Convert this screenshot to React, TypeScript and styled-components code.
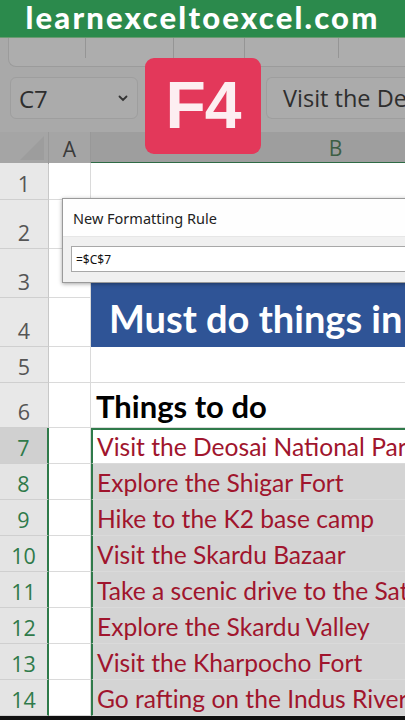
import React from "react";
import styled, { createGlobalStyle } from "styled-components";

const GlobalStyle = createGlobalStyle`
  html, body { margin: 0; padding: 0; background: #ffffff; }
  body { width: 405px; height: 720px; overflow: hidden; }
  * { box-sizing: border-box; }
`;

const Page = styled.div`
  position: relative;
  width: 405px;
  height: 720px;
  display: flex;
  flex-direction: column;
  overflow: hidden;
  background: #fff;
`;

const TopBar = styled.div`
  height: 38px;
  background: #2b8a4c;
  display: flex;
  align-items: center;
  justify-content: center;
  color: #fff;
  font-family: Lato, "Open Sans", sans-serif;
  font-weight: 900;
  font-size: 31px;
  line-height: 1;
  letter-spacing: 2.2px;
  padding-bottom: 3px;
  white-space: nowrap;
  border-bottom: 1px solid #6a9a70;
`;

const Ribbon = styled.div`
  background: #a9a9a9;
  display: flex;
  flex-direction: column;
`;

const TabStrip = styled.div`
  margin: 0 0 0 8px;
  height: 29px;
  display: grid;
  grid-template-columns: 77px 88px 71px 94px 1fr;
  background: #adadad;
  border: 1px solid #9b9b9b;
  border-top: none;
  border-right: none;
  border-radius: 0 0 0 8px;
`;

const TabCell = styled.div<{ $last?: boolean }>`
  border-right: ${(p) => (p.$last ? "none" : "1px solid #959595")};
  margin: 0 0 8px;
`;

const ToolRow = styled.div`
  height: 65px;
  display: flex;
  align-items: flex-start;
  padding: 10px 0 0 10px;
`;

const NameBox = styled.div`
  width: 128px;
  height: 42px;
  border-radius: 6px;
  background: #ababab;
  border: 1px solid #9e9e9e;
  display: flex;
  align-items: center;
  justify-content: space-between;
  padding: 0 8px 0 8px;
  font-family: "Open Sans", "Noto Sans", sans-serif;
  font-size: 24px;
  color: #2e2e2e;
`;

const Chevron = styled.svg`
  width: 12px;
  height: 12px;
`;

const FormulaBox = styled.div`
  margin-left: 128px;
  flex: 1;
  height: 42px;
  border-radius: 6px 0 0 6px;
  background: #ababab;
  border: 1px solid #9e9e9e;
  border-right: none;
  display: flex;
  align-items: center;
  padding-left: 16px;
  white-space: nowrap;
  overflow: hidden;
  font-family: "Open Sans", "Noto Sans", sans-serif;
  font-size: 23.5px;
  color: #2e2e2e;
`;

const ColHeaders = styled.div`
  height: 31px;
  display: grid;
  grid-template-columns: 49px 42px 490px;
  background: #a5a5a5;
  font-family: "Open Sans", "Noto Sans", sans-serif;
  font-size: 21px;
  color: #3a3a3a;
`;

const Corner = styled.div`
  position: relative;
  border-right: 1px solid #999;
  svg { position: absolute; right: 4px; bottom: 4px; }
`;

const ColHead = styled.div<{ $selected?: boolean }>`
  display: flex;
  align-items: center;
  justify-content: center;
  padding-top: 2px;
  background: ${(p) => (p.$selected ? "#9e9e9e" : "#a5a5a5")};
  border-right: 1px solid #989898;
  border-bottom: ${(p) => (p.$selected ? "2px solid #2e6b45" : "1px solid #989898")};
  color: ${(p) => (p.$selected ? "#3d5e45" : "#3a3a3a")};
`;

const Sheet = styled.div`
  display: grid;
  grid-template-columns: 49px 42px 490px;
  grid-template-rows: 37px 49px 49px 49px 36px 45px repeat(8, 36px);
  font-family: "Open Sans", "Noto Sans", sans-serif;
`;

const RowHead = styled.div<{ $state?: "normal" | "active" | "sel" }>`
  display: flex;
  align-items: flex-end;
  justify-content: center;
  padding-bottom: 1px;
  font-size: 21.5px;
  background: ${(p) =>
    p.$state === "active" ? "#d0d0d0" : p.$state === "sel" ? "#e4e4e4" : "#e8e8e8"};
  color: ${(p) => (p.$state && p.$state !== "normal" ? "#2f7a4a" : "#555")};
  border-bottom: 1px solid #cfcfcf;
  border-right: ${(p) => (p.$state && p.$state !== "normal" ? "2px solid #2f7a4a" : "1px solid #c8c8c8")};
`;

const Cell = styled.div<{ $bg?: string; $topSel?: boolean; $leftSel?: boolean }>`
  background: ${(p) => p.$bg || "#fff"};
  border-bottom: 1px solid #dadada;
  border-right: 1px solid #dadada;
  border-left: ${(p) => (p.$leftSel ? "2px solid #2f7a4a" : "none")};
  border-top: ${(p) => (p.$topSel ? "2px solid #2f7a4a" : "none")};
  display: flex;
  align-items: flex-end;
  white-space: nowrap;
  overflow: hidden;
`;

const Banner = styled.div`
  grid-row: span 2;
  background: #2f5496;
  color: #fff;
  font-family: Lato, "Open Sans", sans-serif;
  font-weight: 700;
  font-size: 38px;
  display: flex;
  align-items: flex-end;
  padding: 0 0 6px 18px;
  white-space: nowrap;
  overflow: hidden;
`;

const HeadingText = styled.span`
  font-family: Lato, "Open Sans", sans-serif;
  font-weight: 700;
  font-size: 31px;
  color: #000;
  padding: 0 0 2px 5px;
`;

const ItemText = styled.span`
  font-family: Lato, "Open Sans", sans-serif;
  font-size: 24.6px;
  color: #a0152d;
  padding: 0 0 2px 4px;
`;

const BottomEdge = styled.div`
  flex: 1;
  background: #111;
`;

const Badge = styled.div`
  position: absolute;
  left: 145px;
  top: 58px;
  width: 116px;
  height: 96px;
  border-radius: 9px;
  background: #e3385a;
  color: #fdeef1;
  display: flex;
  align-items: center;
  justify-content: center;
  font-family: "Liberation Sans", Arial, sans-serif;
  font-weight: 700;
  font-size: 66px;
  letter-spacing: -1px;
  padding-bottom: 2px;
`;

const Dialog = styled.div`
  position: absolute;
  left: 62px;
  top: 198px;
  width: 360px;
  height: 85px;
  background: #f0f0f0;
  border: 1px solid #9a9a9a;
  box-shadow: 0 1px 4px rgba(0, 0, 0, 0.35);
  display: flex;
  flex-direction: column;
  font-family: "Noto Sans", "Open Sans", sans-serif;
`;

const DialogTitle = styled.div`
  height: 38px;
  background: #fefefe;
  display: flex;
  align-items: center;
  padding-left: 10px;
  font-size: 14.5px;
  color: #222;
  border-bottom: 1px solid #e6e6e6;
`;

const DialogBody = styled.div`
  padding: 9px 0 0 8px;
`;

const RuleInput = styled.div`
  height: 26px;
  background: #fff;
  border: 1px solid #a8a8a8;
  border-right: none;
  display: flex;
  align-items: center;
  padding-left: 4px;
  font-size: 12px;
  color: #111;
`;

type RowState = "normal" | "active" | "sel";

const items = [
  "Visit the Deosai National Park",
  "Explore the Shigar Fort",
  "Hike to the K2 base camp",
  "Visit the Skardu Bazaar",
  "Take a scenic drive to the Satpara Lake",
  "Explore the Skardu Valley",
  "Visit the Kharpocho Fort",
  "Go rafting on the Indus River",
];

export default function App() {
  const tabs = [0, 1, 2, 3, 4];
  return (
    <Page>
      <GlobalStyle />
      <TopBar>learnexceltoexcel.com</TopBar>
      <Ribbon>
        <TabStrip>
          {tabs.map((t) => (
            <TabCell key={t} $last={t === 4} />
          ))}
        </TabStrip>
        <ToolRow>
          <NameBox>
            C7
            <Chevron viewBox="0 0 12 12">
              <path d="M2.5 4.5 L6 8 L9.5 4.5" fill="none" stroke="#333" strokeWidth="1.8" strokeLinecap="round" />
            </Chevron>
          </NameBox>
          <FormulaBox>Visit the Deosai National Park</FormulaBox>
        </ToolRow>
      </Ribbon>
      <ColHeaders>
        <Corner>
          <svg width="24" height="24" viewBox="0 0 24 24">
            <path d="M24 0 L24 24 L0 24 Z" fill="#9d9d9d" />
          </svg>
        </Corner>
        <ColHead>A</ColHead>
        <ColHead $selected>B</ColHead>
      </ColHeaders>
      <Sheet>
        <RowHead $state="normal">1</RowHead>
        <Cell />
        <Cell />
        <RowHead $state="normal">2</RowHead>
        <Cell />
        <Cell />
        <RowHead $state="normal">3</RowHead>
        <Cell />
        <Banner>Must do things in Skardu</Banner>
        <RowHead $state="normal">4</RowHead>
        <Cell />
        <RowHead $state="normal">5</RowHead>
        <Cell />
        <Cell />
        <RowHead $state="normal">6</RowHead>
        <Cell />
        <Cell>
          <HeadingText>Things to do</HeadingText>
        </Cell>
        {items.map((text, i) => {
          const state: RowState = i === 0 ? "active" : "sel";
          const n = 7 + i;
          return (
            <React.Fragment key={n}>
              <RowHead $state={state}>{n}</RowHead>
              <Cell />
              <Cell $bg={i === 0 ? "#ffffff" : "#d4d4d4"} $leftSel $topSel={i === 0}>
                <ItemText>{text}</ItemText>
              </Cell>
            </React.Fragment>
          );
        })}
      </Sheet>
      <BottomEdge />
      <Badge>F4</Badge>
      <Dialog>
        <DialogTitle>New Formatting Rule</DialogTitle>
        <DialogBody>
          <RuleInput>=$C$7</RuleInput>
        </DialogBody>
      </Dialog>
    </Page>
  );
}
